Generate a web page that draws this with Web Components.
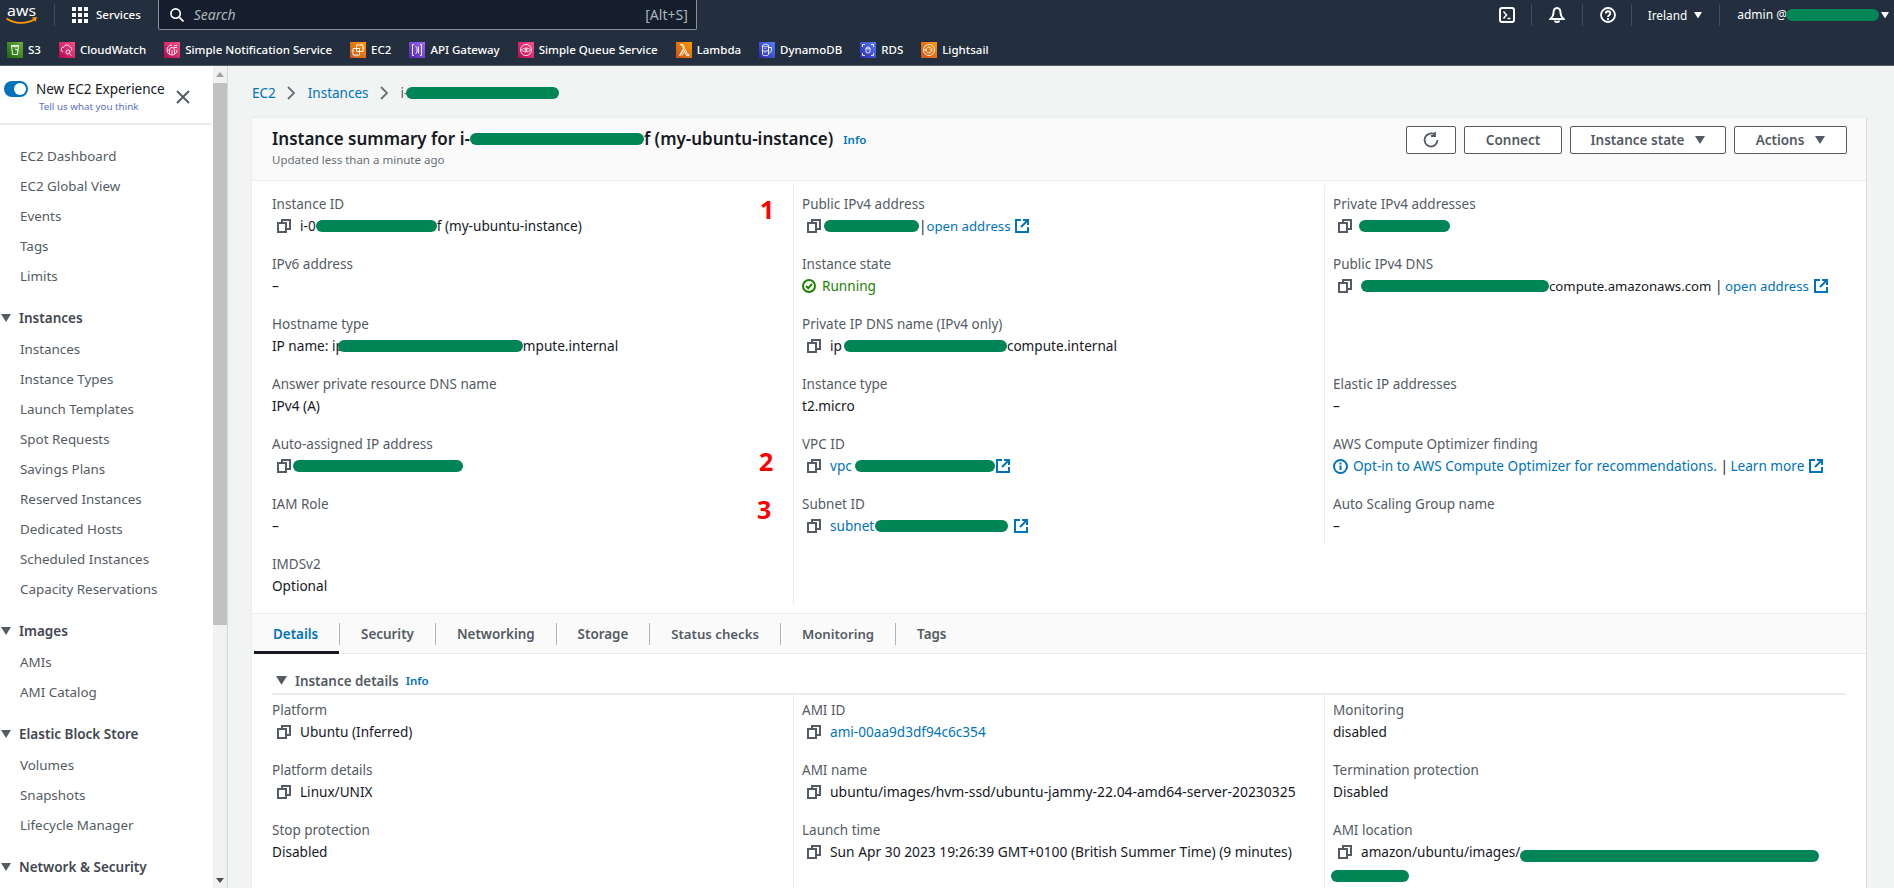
<!DOCTYPE html>
<html><head><meta charset="utf-8"><title>EC2 Instance</title>
<style>
html,body{margin:0;height:888px;overflow:hidden;background:#f2f3f3}
body{font:13.6px/20px "Noto Sans","Open Sans",sans-serif;color:#16191f}
</style></head><body>
<aws-console></aws-console>
<script>
const def=(name,css,html)=>{customElements.define(name,class extends HTMLElement{
  constructor(){super();this.attachShadow({mode:'open'});}
  connectedCallback(){ if(this.shadowRoot.childNodes.length)return; this.shadowRoot.innerHTML=`<style>${css}</style>${typeof html==='function'?html(this):html}`;}
});};

def('redact-pill',`:host{display:inline-block;height:12px;border-radius:6px;background:#008556;vertical-align:-1px}`,h=>{h.style.width=(h.getAttribute('w')||60)+'px';return ''});
def('copy-icon',`:host{display:inline-flex;width:14px;height:14px;margin:0 9px 0 5px;vertical-align:-2px}svg{display:block}`,
 `<svg width="14" height="14" viewBox="0 0 14 14" fill="none" stroke="#545b64" stroke-width="2"><path d="M5 3.500V1h8v9h-3"/><rect x="1" y="4" width="8" height="9" fill="#fff"/></svg>`);
def('ext-icon',`:host{display:inline-flex;width:14px;height:14px;margin-left:5px;vertical-align:-2px}svg{display:block}`,
 `<svg width="14" height="14" viewBox="0 0 14 14" fill="none" stroke="#0073bb" stroke-width="2"><path d="M6 1H1v12h12V8"/><path d="M8 1h5v5M13 1 6 8"/></svg>`);
def('caret-down',`:host{display:inline-flex;vertical-align:middle}`,h=>{const w=+(h.getAttribute('size')||10);return `<svg width="${w}" height="${w*.8}" viewBox="0 0 10 8"><path d="M0 0h10L5 8z" fill="${h.getAttribute('color')||'#545b64'}"/></svg>`});

/* top nav */
def('nav-divider',`:host{display:block;width:1px;height:22px;background:#414d5c}`,'');
def('nav-services',`:host{display:flex;align-items:center;gap:8px;color:#fff;font-size:11.5px;font-weight:500;margin:0 17px}
 .g{display:grid;grid-template-columns:repeat(3,4px);grid-auto-rows:4px;gap:2px}.g i{background:#fff}`,`<div class="g"><i></i><i></i><i></i><i></i><i></i><i></i><i></i><i></i><i></i></div><span>Services</span>`);
def('nav-search',`:host{display:flex;align-items:center;box-sizing:border-box;width:539px;height:30px;background:#161e2d;border:1px solid #879596;border-top:0;border-radius:0 0 2px 2px;padding:0 8px 0 11px;color:#aab7b8;font-size:14px}
 svg{margin-right:10px;flex:none}em{font-style:italic;flex:1;font-size:14px}`,`<svg width="14" height="14" viewBox="0 0 15 15" fill="none" stroke="#fff" stroke-width="1.800"><circle cx="6" cy="6" r="5"/><path d="M10 10l4.500 4.500"/></svg><em>Search</em><span>[Alt+S]</span>`);
def('aws-logo',`:host{display:block;width:33px;height:26px;margin:1px 15px 0 6px;align-self:flex-start}svg{display:block}`,
 `<svg width="33" height="26" viewBox="0 0 33 26"><text x="1" y="15" font-family="Noto Sans,sans-serif" font-size="15" fill="#fff" textLength="29" lengthAdjust="spacingAndGlyphs">aws</text><path d="M0.500 17.500c8 5.500 20 6 28 .8" fill="none" stroke="#ff9900" stroke-width="1.800"/><path d="M26 16.500l5-.5-1.500 5z" fill="#ff9900"/></svg>`);
def('top-nav',`:host{display:flex;height:38px;color:#fff}
 .l{display:flex;align-items:center;height:30px}
 .r{display:flex;align-items:center;margin-left:auto;height:30px;padding-right:5px}
 .txt{display:flex;align-items:center;font-size:12px;color:#fff;height:22px;white-space:nowrap}
 .v{width:1px;height:22px;background:#414d5c}`,
 `<div class="l"><aws-logo></aws-logo><nav-divider></nav-divider><nav-services></nav-services><nav-search></nav-search></div>
 <div class="r">
  <svg width="16" height="16" viewBox="0 0 16 16" style="margin-right:16px"><rect x="1" y="1" width="14" height="14" rx="2" fill="none" stroke="#fff" stroke-width="2"/><path d="M4.500 4.500l3 3.500-3 3.500" fill="none" stroke="#fff" stroke-width="1.500"/><path d="M8.500 11.500h3" stroke="#fff" stroke-width="1.500"/></svg>
  <div class="v"></div>
  <svg width="16" height="16" viewBox="0 0 16 16" style="margin:0 17px" fill="none" stroke="#fff" stroke-width="2"><path d="M8 1c2.500 0 3.500 2.500 3.500 5 0 2.500 1 4 3 6H1.500c2-2 3-3.500 3-6C4.500 3.500 5.500 1 8 1z"/><path d="M6 13.500c0 2 4 2 4 0"/></svg>
  <div class="v"></div>
  <svg width="16" height="16" viewBox="0 0 16 16" style="margin:0 15px 0 17px" fill="none" stroke="#fff" stroke-width="1.800"><circle cx="8" cy="8" r="7"/><path d="M5.800 6.500c0-3 4.500-3 4.500 0 0 1.800-2.300 1.800-2.300 3.500"/><path d="M8 11v2"/></svg>
  <div class="v"></div>
  <div class="txt" style="margin:0 17px 0 16px;font-size:11.800px">Ireland<caret-down color="#fff" size="8" style="margin-left:7px"></caret-down></div>
  <div class="v"></div>
  <div class="txt" style="margin:0 0 0 17px"><span>admin @</span><redact-pill w="93" style="margin-left:-1px"></redact-pill><caret-down color="#fff" size="8" style="margin-left:2px"></caret-down></div>
 </div>`);

/* favourites */
const favIcons={
 s3:['#1b660f','#6cae3e','M4.500 3.500h7l-1 9h-5zM4.500 3.500c1.500 1.800 5.500 1.800 7 0M8 7l3.500 1.500'],
 cw:['#b0084d','#ff4f8b','M4 10a2.500 2.500 0 0 1 .6-4.900A3.500 3.500 0 0 1 11 5a2.500 2.500 0 0 1 1.500 3.500M7 10a2 2 0 1 0 4 0 2 2 0 1 0-4 0M10.500 11.500l2 2'],
 sns:['#b0084d','#ff4f8b','M8 3a5 5 0 1 0 5 5M5.500 12V8a2.500 2.500 0 0 1 5 0v4M8 8v5M10 3.500h3M10 5.500h3M3.500 8h1.500'],
 ec2:['#c8511b','#ff9900','M6.500 3h6.500v6.500H6.500zM3 6.500h6.500V13H3zM5 13v1.500M7.500 13v1.500M3 9H1.500M11 1.500V3M13 6h1.500'],
 api:['#4d27a8','#a166ff','M5 2.500H3.500v11H5M11 2.500h1.500v11H11M6.500 4.500l1.500 1v5l-1.500 1M9.500 4.500v7'],
 sqs:['#b0084d','#ff4f8b','M8 2.500a5.500 5.500 0 1 0 .01 0M3.500 8c2-2.500 7-2.500 9 0-2 2.500-7 2.500-9 0M8 7a1 1 0 1 0 .01 0'],
 lam:['#c8511b','#ff9900','M3.500 13.500l4-7-1.500-3.500H4.500V2.500H7l4.500 10h1.500v1H10.500L7.500 7.500l-3.200 6zM8 10l-2 3.500'],
 ddb:['#2e27ad','#527fff','M3.500 3.500c0-1.500 6-1.500 6 0v9c0 1.500-6 1.500-6 0zM3.500 3.500c0 1.500 6 1.500 6 0M3.500 8c0 1.500 6 1.500 6 0M9.500 5.500h3V9l-3 3M6 6v1M6 10v1'],
 rds:['#2e27ad','#527fff','M2.500 2.500h2.500M2.500 2.500V5M13.500 2.500H11M13.500 2.500V5M2.500 13.500H5M2.500 13.500V11M13.500 13.500H11M13.500 13.500V11M6 6c0-1.200 4-1.200 4 0v4c0 1.200-4 1.200-4 0zM6 6c0 1.200 4 1.200 4 0'],
 ls:['#c8511b','#ff9900','M8 2.500a5.500 5.500 0 1 0 .01 0M2.500 8H6M8 5a3 3 0 1 0 .01 0M9 6.500l1.500 1.500L9 9.500']
};
def('fav-icon',`:host{display:block;width:16px;height:16px}svg{display:block}`,h=>{const k=h.getAttribute('k');const[a,b,d]=favIcons[k];
 return `<svg width="16" height="16" viewBox="0 0 16 16"><defs><linearGradient id="g" x1="0" y1="1" x2="1" y2="0"><stop offset="0" stop-color="${a}"/><stop offset="1" stop-color="${b}"/></linearGradient></defs><rect width="16" height="16" fill="url(#g)"/><path d="${d}" fill="none" stroke="#fff" stroke-width=".9"/></svg>`});
def('fav-item',`:host{display:flex;align-items:center;gap:5px;color:#fff;font-size:11.500px;font-weight:500;white-space:nowrap}`,h=>`<fav-icon k="${h.getAttribute('k')}"></fav-icon><span><slot></slot></span>`);
def('fav-bar',`:host{display:flex;align-items:center;height:24px;padding-left:7px;gap:18px}`,`<slot></slot>`);
def('site-header',`:host{display:block;height:65px;background:#232f3e;border-bottom:1px solid #545b64;box-sizing:content-box}`,
 `<top-nav></top-nav><fav-bar>
 <fav-item k="s3">S3</fav-item><fav-item k="cw">CloudWatch</fav-item><fav-item k="sns">Simple Notification Service</fav-item><fav-item k="ec2">EC2</fav-item><fav-item k="api">API Gateway</fav-item><fav-item k="sqs">Simple Queue Service</fav-item><fav-item k="lam">Lambda</fav-item><fav-item k="ddb">DynamoDB</fav-item><fav-item k="rds">RDS</fav-item><fav-item k="ls">Lightsail</fav-item>
 </fav-bar>`);

/* sidebar */
def('side-link',`:host{display:flex;align-items:center;height:30px;padding-left:20px;color:#545b64;font-size:13.400px;white-space:nowrap}`,`<slot></slot>`);
def('side-head',`:host{display:flex;align-items:center;height:30px;margin:12px 0 1px;padding-left:1px;color:#414750;font-weight:600;font-size:13.500px;gap:8px;white-space:nowrap}`,`<caret-down size="10"></caret-down><slot></slot>`);
def('new-exp',`:host{display:block;box-sizing:border-box;height:59px;border-bottom:2px solid #eaeded;position:relative;white-space:nowrap}
 .row{display:flex;align-items:center;padding:13px 0 0 4px;gap:8px;font-size:13.500px;color:#16191f;height:20px}
 .t{width:24px;height:16px;border-radius:8px;background:#0073bb;position:relative}
 .t:after{content:"";position:absolute;right:2px;top:2px;width:12px;height:12px;border-radius:50%;background:#fff}
 .s{font-size:9.800px;line-height:14px;color:#5a6ec8;padding-left:39px;margin-top:1px}
 svg{position:absolute;left:176px;top:24px}`,
 `<div class="row"><span class="t"></span><span>New EC2 Experience</span></div><div class="s">Tell us what you think</div><svg width="14" height="14" viewBox="0 0 14 14" stroke="#545b64" stroke-width="2"><path d="M1 1l12 12M13 1L1 13"/></svg>`);
def('side-scroll',`:host{display:block;width:14px;margin-left:1px;background:#f1f1f1;position:relative;flex:none}
 .u,.d{position:absolute;left:3px;width:0;height:0;border-left:4px solid transparent;border-right:4px solid transparent}
 .u{top:6px;border-bottom:5px solid #a3a3a3}.d{bottom:5px;border-top:5px solid #505050}
 .th{position:absolute;left:0;right:0;top:17px;height:542px;background:#c1c1c1}`,`<div class="u"></div><div class="th"></div><div class="d"></div>`);
def('ec2-sidebar',`:host{display:flex;width:227px;height:100%;flex:none;background:#fff;border-right:1px solid #d5dbdb;overflow:hidden}
 .c{width:212px;flex:none}.lst{padding-top:15.500px}`,
 `<div class="c"><new-exp></new-exp><div class="lst">
 <side-link>EC2 Dashboard</side-link><side-link>EC2 Global View</side-link><side-link>Events</side-link><side-link>Tags</side-link><side-link>Limits</side-link>
 <side-head>Instances</side-head>
 <side-link>Instances</side-link><side-link>Instance Types</side-link><side-link>Launch Templates</side-link><side-link>Spot Requests</side-link><side-link>Savings Plans</side-link><side-link>Reserved Instances</side-link><side-link>Dedicated Hosts</side-link><side-link>Scheduled Instances</side-link><side-link>Capacity Reservations</side-link>
 <side-head>Images</side-head><side-link>AMIs</side-link><side-link>AMI Catalog</side-link>
 <side-head>Elastic Block Store</side-head><side-link>Volumes</side-link><side-link>Snapshots</side-link><side-link>Lifecycle Manager</side-link>
 <side-head>Network &amp; Security</side-head>
 </div></div><side-scroll></side-scroll>`);

/* breadcrumb */
def('bread-crumbs',`:host{display:flex;align-items:center;height:20px;color:#545b64;font-size:13.500px;white-space:nowrap}
 a{color:#0073bb}svg{margin:0 12px 0 11px}`,
 `<a>EC2</a><svg width="9" height="16" viewBox="0 0 9 16" fill="none" stroke="#687078" stroke-width="1.800"><path d="M1 2l6 6-6 6"/></svg><a>Instances</a><svg width="9" height="16" viewBox="0 0 9 16" fill="none" stroke="#687078" stroke-width="1.800"><path d="M1 2l6 6-6 6"/></svg><span>i-</span><redact-pill w="153" style="margin-left:-2px"></redact-pill>`);

def('aws-btn',`:host{display:inline-flex;align-items:center;justify-content:center;box-sizing:border-box;height:28px;border:1px solid #545b64;border-radius:2px;background:#fff;color:#545b64;font-weight:600;font-size:13.500px;gap:11px;white-space:nowrap}`,`<slot></slot>`);

/* key-value */
def('kv-item',`:host{display:block;height:60px;white-space:nowrap}
 .l{color:#545b64;height:20px;line-height:20px;font-size:13.500px}.v{color:#16191f;height:20px;line-height:20px;margin-top:2px;font-size:13.600px}`,h=>`<div class="l">${h.getAttribute('label')}</div><div class="v"><slot></slot></div>`);
def('kv-col',`:host{display:block;border-left:1px solid #eaeded;padding-left:8px;box-sizing:border-box}:host([first]){border-left:0;padding-left:0}`,`<slot></slot>`);
def('kv-grid',`:host{display:grid;grid-template-columns:521px 531px 1fr;align-items:start}`,`<slot></slot>`);

/* tabs */
def('tab-item',`:host{display:flex;align-items:center;height:22px;padding:0 21px;color:#545b64;font-weight:600;font-size:13.400px;border-right:1px solid #aab7b8;white-space:nowrap}
 :host(:last-child){border-right:0}:host([active]){color:#0073bb;padding-left:19px}`,`<slot></slot>`);
def('tab-bar',`:host{display:flex;position:relative;align-items:center;height:41px;box-sizing:border-box;background:#fafafa;border-top:1px solid #eaeded;border-bottom:1px solid #eaeded;padding-left:2px}
 .u{position:absolute;left:2px;width:85px;height:3px;background:#16191f;bottom:-1px}`,`<slot></slot><div class="u"></div>`);

/* card */
def('summary-card',`:host{display:block;width:1616px;background:#fff;border:1px solid #eaeded;border-bottom:0;border-right:1px solid #d5dbdb;box-sizing:border-box;position:relative}
 header{display:flex;height:63px;box-sizing:border-box;background:#fafafa;border-bottom:1px solid #eaeded;padding:11px 19px 0 20px;justify-content:space-between}
 h1{margin:0;font-size:17px;line-height:20px;font-weight:600;color:#16191f;white-space:nowrap;display:flex;align-items:center}
 .sub{font-size:11.500px;line-height:16px;color:#687078;margin-top:3px}
 .info{font-size:11.500px;font-weight:600;color:#0073bb;margin-left:10px;position:relative;top:1px}
 .btns{display:flex;gap:8px;margin-top:-3px;height:28px}
 .sum{padding:13px 0 0 20px;height:432px;box-sizing:border-box}
 .num{position:absolute;font-size:25px;line-height:25px;font-weight:700;color:#f00}
 .sec{padding:16.500px 20px 0 20px}
 .sh{display:flex;align-items:center;height:20px;gap:8px;font-weight:600;color:#545b64;font-size:13.400px;padding-left:4px;margin-bottom:2px}
 .sh b{font-size:11.500px;font-weight:600;color:#0073bb;margin-left:-1px}
 .hr{border-top:2px solid #eaeded;margin-bottom:5px}`,
 `<header><div><h1>Instance summary for i-<redact-pill w="174"></redact-pill>f (my-ubuntu-instance)<span class="info">Info</span></h1><div class="sub">Updated less than a minute ago</div></div>
 <div class="btns"><aws-btn style="width:50px"><svg width="18" height="18" viewBox="0 0 18 18" fill="none" stroke="#545b64" stroke-width="1.800"><path d="M15.500 9a6.500 6.500 0 1 1-3-5.500"/><path d="M13 1v4H9"/></svg></aws-btn><aws-btn style="width:98px">Connect</aws-btn><aws-btn style="width:156px">Instance state<caret-down size="10"></caret-down></aws-btn><aws-btn style="width:113px">Actions<caret-down size="10"></caret-down></aws-btn></div></header>
 <div class="sum"><slot name="summary"></slot></div>
 <span class="num" style="top:79px;left:508px">1</span><span class="num" style="top:331px;left:507px">2</span><span class="num" style="top:379px;left:505px">3</span>
 <slot name="tabs"></slot>
 <div class="sec"><div class="sh"><caret-down size="11"></caret-down>Instance details<b>Info</b></div><div class="hr"></div><slot name="details"></slot></div>`);

/* main */
def('main-pane',`:host{display:block;flex:1;min-width:0;padding:17px 0 0 23px;overflow:hidden;background:#f2f3f3;height:100%;box-sizing:border-box}
 bread-crumbs{margin:0 0 14px 1px}
 a{color:#0073bb}
 a.n{font-size:13.200px}`,
 `<bread-crumbs></bread-crumbs>
 <summary-card>
 <kv-grid slot="summary">
  <kv-col first>
   <kv-item label="Instance ID"><copy-icon></copy-icon>i-0<redact-pill w="121"></redact-pill>f (my-ubuntu-instance)</kv-item>
   <kv-item label="IPv6 address">–</kv-item>
   <kv-item label="Hostname type">IP name: ip<redact-pill w="185" style="margin-left:-6px"></redact-pill>mpute.internal</kv-item>
   <kv-item label="Answer private resource DNS name">IPv4 (A)</kv-item>
   <kv-item label="Auto-assigned IP address"><copy-icon style="margin-right:2px"></copy-icon><redact-pill w="170"></redact-pill></kv-item>
   <kv-item label="IAM Role">–</kv-item>
   <kv-item label="IMDSv2">Optional</kv-item>
  </kv-col>
  <kv-col style="height:420px;margin-top:-9px;padding-top:9px">
   <kv-item label="Public IPv4 address"><copy-icon style="margin-right:3px"></copy-icon><redact-pill w="95"></redact-pill>|<a class="n" style="margin-left:0">open address</a><ext-icon></ext-icon></kv-item>
   <kv-item label="Instance state"><span style="color:#1d8102"><svg width="14" height="14" viewBox="0 0 14 14" fill="none" stroke="#1d8102" stroke-width="2" style="vertical-align:-2px;margin:0 6px 0 0"><circle cx="7" cy="7" r="6"/><path d="M4 7l2.200 2.200L10 4.800"/></svg>Running</span></kv-item>
   <kv-item label="Private IP DNS name (IPv4 only)"><copy-icon></copy-icon>ip<redact-pill w="163" style="margin-left:2px"></redact-pill>compute.internal</kv-item>
   <kv-item label="Instance type">t2.micro</kv-item>
   <kv-item label="VPC ID"><copy-icon></copy-icon><a>vpc</a><redact-pill w="140" style="margin-left:3px"></redact-pill><ext-icon style="margin-left:1px"></ext-icon></kv-item>
   <kv-item label="Subnet ID"><copy-icon></copy-icon><a>subnet</a><redact-pill w="133" style="margin-left:1px"></redact-pill><ext-icon style="margin-left:6px"></ext-icon></kv-item>
  </kv-col>
  <kv-col style="height:360px;margin-top:-9px;padding-top:9px">
   <kv-item label="Private IPv4 addresses"><copy-icon style="margin-right:7px"></copy-icon><redact-pill w="91"></redact-pill></kv-item>
   <kv-item label="Public IPv4 DNS"><copy-icon></copy-icon><redact-pill w="188"></redact-pill><span style="font-size:13.200px">compute.amazonaws.com</span> | <a class="n" style="margin-left:-1px">open address</a><ext-icon></ext-icon></kv-item>
   <div style="height:60px"></div>
   <kv-item label="Elastic IP addresses">–</kv-item>
   <kv-item label="AWS Compute Optimizer finding"><svg width="15" height="15" viewBox="0 0 15 15" fill="none" stroke="#0073bb" stroke-width="2" style="vertical-align:-3px;margin-right:5px"><circle cx="7.500" cy="7.500" r="6.500"/><path d="M7.500 6.500v4.500M7.500 3.500v2"/></svg><a>Opt-in to AWS Compute Optimizer for recommendations.</a> | <a style="margin-left:-1px">Learn more</a><ext-icon></ext-icon></kv-item>
   <kv-item label="Auto Scaling Group name">–</kv-item>
  </kv-col>
 </kv-grid>
 <tab-bar slot="tabs"><tab-item active>Details</tab-item><tab-item>Security</tab-item><tab-item>Networking</tab-item><tab-item>Storage</tab-item><tab-item style="font-size:13.200px">Status checks</tab-item><tab-item style="font-size:13.200px">Monitoring</tab-item><tab-item>Tags</tab-item></tab-bar>
 <kv-grid slot="details">
  <kv-col first>
   <kv-item label="Platform"><copy-icon></copy-icon>Ubuntu (Inferred)</kv-item>
   <kv-item label="Platform details"><copy-icon></copy-icon>Linux/UNIX</kv-item>
   <kv-item label="Stop protection">Disabled</kv-item>
  </kv-col>
  <kv-col style="margin-top:-9px;padding-top:9px;height:220px">
   <kv-item label="AMI ID"><copy-icon></copy-icon><a>ami-00aa9d3df94c6c354</a></kv-item>
   <kv-item label="AMI name"><copy-icon></copy-icon><span style="font-size:13.900px">ubuntu/images/hvm-ssd/ubuntu-jammy-22.04-amd64-server-20230325</span></kv-item>
   <kv-item label="Launch time"><copy-icon></copy-icon><span style="font-size:13.800px">Sun Apr 30 2023 19:26:39 GMT+0100 (British Summer Time) (9 minutes)</span></kv-item>
  </kv-col>
  <kv-col style="margin-top:-9px;padding-top:9px;height:220px">
   <kv-item label="Monitoring">disabled</kv-item>
   <kv-item label="Termination protection">Disabled</kv-item>
   <kv-item label="AMI location"><copy-icon></copy-icon>amazon/ubuntu/images/<redact-pill w="299" style="vertical-align:-5px"></redact-pill><br><redact-pill w="78" style="vertical-align:-5px;margin-left:-2px"></redact-pill></kv-item>
  </kv-col>
 </kv-grid>
 </summary-card>`);

def('aws-console',`:host{display:flex;flex-direction:column;height:888px;overflow:hidden}
 .b{display:flex;flex:1;min-height:0}`,`<site-header></site-header><div class="b"><ec2-sidebar></ec2-sidebar><main-pane></main-pane></div>`);
</script>
</body></html>
